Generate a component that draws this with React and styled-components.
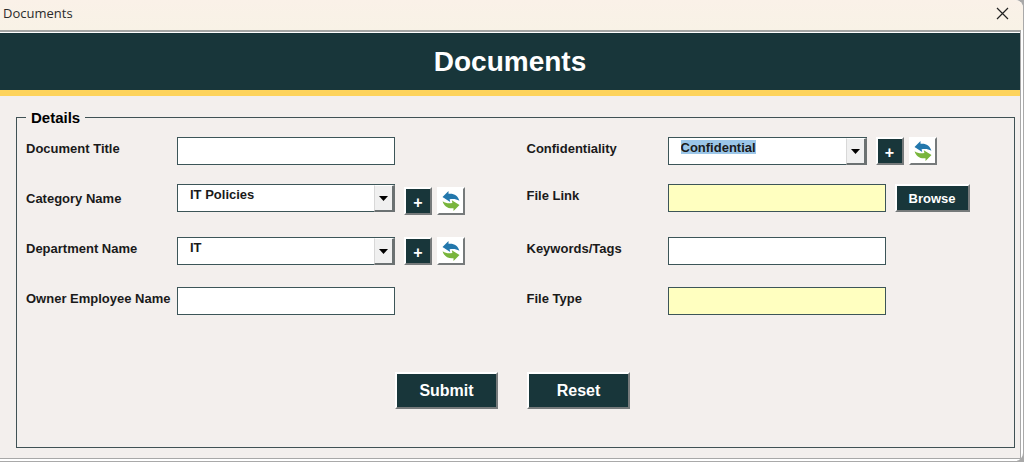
import React, { useState } from 'react';
import styled, { createGlobalStyle } from 'styled-components';

const GlobalStyle = createGlobalStyle`
  * {
    box-sizing: border-box;
  }

  body {
    margin: 0;
    background: #a9a9a9;
    font-family: 'Liberation Sans', Arial, sans-serif;
    font-size: 13px;
    font-weight: bold;
    color: #1a1a1a;
  }
`;

const Window = styled.div`
  margin-right: 1px;
  padding: 0 2px 2px 0;
  background: #fff;
  border-radius: 0 8px 8px 0;
  overflow: hidden;
`;

const TitleBar = styled.header`
  display: flex;
  align-items: center;
  justify-content: space-between;
  height: 30px;
  padding: 0 14px 4px 3px;
  margin-right: -2px;
  background: linear-gradient(to bottom, #faf1e8, #f8f2e6);
  color: #2b2b2b;
  font-family: 'Open Sans', sans-serif;
  font-size: 13px;
  font-weight: normal;
`;

const CloseButton = styled.button`
  display: flex;
  padding: 0;
  border: none;
  background: none;
  color: #222;
  cursor: pointer;
`;

const Panel = styled.main`
  border-top: 2px solid #a3a5a3;
  border-right: 1px solid #a8a8a8;
  border-bottom: 1px solid #a8a8a8;
  background: #f3efed;
`;

const Banner = styled.h1`
  margin: 0;
  padding-top: 1px;
  border-top: 1px solid #fff;
  border-bottom: 6px solid #fdd35c;
  background: #18363a;
  color: #fff;
  font-size: 28px;
  line-height: 56px;
  text-align: center;
`;

const Form = styled.form`
  padding: 12px 5px 10px 16px;
`;

const Details = styled.fieldset`
  min-width: 0;
  margin: 0;
  padding: 10px 0 38px 9px;
  border: 1px solid #3f5154;
`;

const Legend = styled.legend`
  padding: 0 5px;
  color: #000;
  font-size: 15px;
  line-height: 19px;
`;

const Columns = styled.div`
  display: grid;
  grid-template-columns: 1fr 1fr;
  gap: 13px;
`;

const Column = styled.div`
  display: grid;
  grid-template-columns: ${props => props.$labelWidth} 1fr;
  grid-template-rows: 47px 53px 50px 28px;
  align-items: start;
`;

const Label = styled.label`
  line-height: 24px;
  white-space: nowrap;
  padding-top: ${props => (props.$low ? '3px' : '0')};
`;

const Controls = styled.div`
  display: flex;
  align-items: flex-start;
  gap: 9px;
`;

const Input = styled.input`
  width: 218px;
  height: 28px;
  padding: 0 12px;
  border: 1px solid #3c5558;
  border-radius: 0;
  background: ${props => (props.readOnly ? '#ffffc0' : '#fff')};
  font: inherit;
  color: inherit;
  outline: none;
`;

const Combo = styled.div`
  position: relative;
  width: ${props => props.$width || '218px'};
`;

const Select = styled.select`
  display: block;
  width: 100%;
  height: 28px;
  padding: 0 24px 8px 12px;
  border: 1px solid #3c5558;
  border-radius: 0;
  appearance: none;
  background-color: #fff;
  background-image: ${props => (props.$highlight ? 'linear-gradient(#9bc6e8, #9bc6e8)' : 'none')};
  background-origin: content-box;
  background-position: 0 2px;
  background-size: 75px 14px;
  background-repeat: no-repeat;
  font: inherit;
  color: inherit;
  outline: none;
`;

const DropArrow = styled.span`
  position: absolute;
  top: 1px;
  right: 0;
  bottom: 0;
  display: flex;
  align-items: center;
  justify-content: center;
  width: 21px;
  border: solid;
  border-width: 1px 3px 2px 1px;
  border-color: #fff #6b7172 #6b7172 #d8d8d8;
  background: #f0f0f0;
  pointer-events: none;
`;

const ButtonPair = styled.div`
  display: flex;
  gap: 5px;
  padding-top: ${props => (props.$low ? '3px' : '0')};
`;

const Button = styled.button`
  display: flex;
  align-items: center;
  justify-content: center;
  width: ${props => props.$width};
  height: ${props => props.$height || '28px'};
  padding: 0;
  border: 2px solid;
  border-color: #fff #767a7b #767a7b #fff;
  background: ${props => (props.$light ? '#fff' : '#18363a')};
  color: #fff;
  font: inherit;
  font-size: ${props => props.$size || '13px'};
  cursor: pointer;
`;

const AddButton = styled(Button)`
  padding-top: 3px;
`;

const Actions = styled.div`
  display: flex;
  justify-content: center;
  gap: 29px;
  padding: 57px 15px 0 0;
`;

function RefreshIcon() {
  return (
    <svg width="18" height="22" viewBox="0 0 18 22" aria-hidden="true">
      <path
        d="M0.5 7 L6.5 1 V3.8 C12 3.2 16 5.6 17.4 10.8 C14.4 8.8 11 8.6 7.6 9.2 L8.2 12 Z"
        fill="#2377ac"
      />
      <path
        d="M17.5 15 L11.5 21 V18.2 C6 18.8 2 16.4 0.6 11.2 C3.6 13.2 7 13.6 10.4 12.9 L9.8 10.2 Z"
        fill="#79b53c"
      />
    </svg>
  );
}

function ComboBox({ id, width, highlight, options }) {
  const [value, setValue] = useState(options[0]);

  return (
    <Combo $width={width}>
      <Select
        id={id}
        value={value}
        $highlight={highlight}
        onChange={(e) => setValue(e.target.value)}
      >
        {options.map((option) => (
          <option key={option}>{option}</option>
        ))}
      </Select>
      <DropArrow>
        <svg width="9" height="5" viewBox="0 0 9 5" aria-hidden="true">
          <path d="M0 0H9L4.5 5Z" fill="#000" />
        </svg>
      </DropArrow>
    </Combo>
  );
}

function AddRefresh({ name, low }) {
  return (
    <ButtonPair $low={low}>
      <AddButton type="button" $width="28px" $size="16px" aria-label={`Add ${name}`}>+</AddButton>
      <Button type="button" $width="28px" $light aria-label={`Refresh ${name}`}>
        <RefreshIcon />
      </Button>
    </ButtonPair>
  );
}

function App() {
  return (
    <>
      <GlobalStyle />
      <Window>
        <TitleBar>
          <span>Documents</span>
          <CloseButton type="button" aria-label="Close">
            <svg width="13" height="13" viewBox="0 0 13 13" aria-hidden="true">
              <path d="M1 1L12 12M12 1L1 12" stroke="currentColor" strokeWidth="1.2" />
            </svg>
          </CloseButton>
        </TitleBar>
        <Panel>
          <Banner>Documents</Banner>
          <Form onSubmit={(e) => e.preventDefault()}>
            <Details>
              <Legend>Details</Legend>
              <Columns>
                <Column $labelWidth="151px">
                  <Label htmlFor="title">Document Title</Label>
                  <Controls>
                    <Input id="title" />
                  </Controls>

                  <Label htmlFor="category" $low>Category Name</Label>
                  <Controls>
                    <ComboBox id="category" options={['IT Policies']} />
                    <AddRefresh name="category" low />
                  </Controls>

                  <Label htmlFor="department">Department Name</Label>
                  <Controls>
                    <ComboBox id="department" options={['IT']} />
                    <AddRefresh name="department" />
                  </Controls>

                  <Label htmlFor="owner">Owner Employee Name</Label>
                  <Controls>
                    <Input id="owner" />
                  </Controls>
                </Column>

                <Column $labelWidth="141px">
                  <Label htmlFor="confidentiality">Confidentiality</Label>
                  <Controls>
                    <ComboBox
                      id="confidentiality"
                      width="199px"
                      highlight
                      options={['Confidential']}
                    />
                    <AddRefresh name="confidentiality" />
                  </Controls>

                  <Label htmlFor="link">File Link</Label>
                  <Controls>
                    <Input id="link" readOnly />
                    <Button type="button" $width="75px">Browse</Button>
                  </Controls>

                  <Label htmlFor="keywords">Keywords/Tags</Label>
                  <Controls>
                    <Input id="keywords" />
                  </Controls>

                  <Label htmlFor="type">File Type</Label>
                  <Controls>
                    <Input id="type" readOnly />
                  </Controls>
                </Column>
              </Columns>

              <Actions>
                <Button type="submit" $width="103px" $height="37px" $size="16px">Submit</Button>
                <Button type="reset" $width="103px" $height="37px" $size="16px">Reset</Button>
              </Actions>
            </Details>
          </Form>
        </Panel>
      </Window>
    </>
  );
}

export default App;
